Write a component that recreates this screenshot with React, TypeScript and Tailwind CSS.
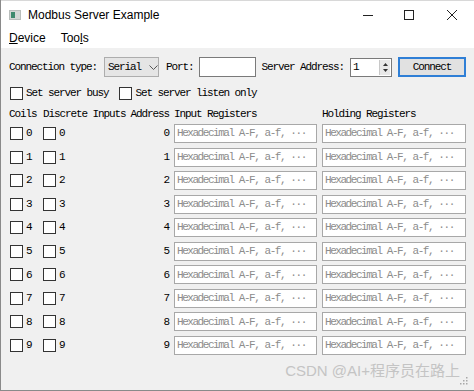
import React from 'react';

const mono = "font-['Liberation_Mono',monospace] text-[11px] tracking-[-1.1px] text-black";
const rows = [0, 1, 2, 3, 4, 5, 6, 7, 8, 9];

function Check() {
  return <span className="block w-[13px] h-[13px] bg-white border border-[#333] shrink-0" />;
}

function HexField({ width }: { width: string }) {
  return (
    <div className={`${width} h-[19px] bg-white border border-[#a8a8a8] flex items-center pl-[2px] overflow-hidden`}>
      <span className="text-[#8c8c8c] whitespace-nowrap tracking-[-1.45px]">Hexadecimal A-F, a-f, ···</span>
    </div>
  );
}

export default function App() {
  return (
    <div className="relative w-[474px] h-[391px] overflow-hidden bg-[#f0f0f0] border-l border-b border-[#8a8a8a]">
      {/* Title bar */}
      <div className="h-[29px] bg-white flex items-center border-t border-[#d8d8d8] font-['Liberation_Sans',sans-serif] text-[12px] text-black">
        <div className="ml-[8px] w-[12px] h-[10px] bg-[#d4d8d6] border border-[#b9bebc] flex items-center pl-[1px]">
          <span className="w-[4px] h-[6px] bg-[#3e8a6e]" />
        </div>
        <span className="ml-[7px]">Modbus Server Example</span>
        <div className="ml-auto flex items-center">
          <svg width="10" height="10" viewBox="0 0 10 10" className="mr-[31px]">
            <path d="M0 5.5h10" stroke="#222" strokeWidth="1" />
          </svg>
          <svg width="10" height="10" viewBox="0 0 10 10" className="mr-[33px]">
            <rect x="0.5" y="0.5" width="9" height="9" fill="none" stroke="#222" strokeWidth="1" />
          </svg>
          <svg width="10" height="10" viewBox="0 0 10 10" className="mr-[17px]">
            <path d="M0 0L10 10M10 0L0 10" stroke="#222" strokeWidth="1" />
          </svg>
        </div>
      </div>

      {/* Menu bar */}
      <div className="h-[19px] bg-white flex items-center font-['Liberation_Sans',sans-serif] text-[12px] text-black pb-[1px]">
        <span className="ml-[8px]"><span className="underline">D</span>evice</span>
        <span className="ml-[15px]">Too<span className="underline">l</span>s</span>
      </div>

      {/* Body */}
      <div className={`${mono} pt-[9px] pl-[8px]`}>
        <div className="h-[20px] flex items-center whitespace-nowrap">
          <span>Connection type:</span>
          <div className="ml-[7px] w-[55px] h-[20px] bg-[#e5e5e5] border border-[#adadad] flex items-center pl-[3px]">
            <span>Serial</span>
            <svg width="9" height="5" viewBox="0 0 9 5" className="ml-[8px]">
              <path d="M0.5 0.5L4.5 4.5L8.5 0.5" fill="none" stroke="#555" strokeWidth="1" />
            </svg>
          </div>
          <span className="ml-[7px]">Port:</span>
          <div className="ml-[5px] w-[57px] h-[20px] bg-white border border-[#7a7a7a]" />
          <span className="ml-[6px]">Server Address:</span>
          <div className="ml-[6px] w-[42px] h-[19px] bg-white border border-[#7a7a7a] flex items-stretch">
            <span className="flex-1 pl-[2px] flex items-center">1</span>
            <div className="w-[11px] my-[1px] mr-[1px] bg-[#e8e8e8] border-l border-[#c8c8c8] flex flex-col items-center justify-center gap-[3px]">
              <svg width="5" height="3" viewBox="0 0 5 3"><path d="M0 3L2.5 0L5 3z" fill="#333" /></svg>
              <svg width="5" height="3" viewBox="0 0 5 3"><path d="M0 0L2.5 3L5 0z" fill="#333" /></svg>
            </div>
          </div>
          <div className="ml-[6px] w-[68px] h-[20px] bg-[#e1e1e1] border-2 border-[#2f7fd6] flex items-center justify-center">
            Connect
          </div>
        </div>

        <div className="mt-[10px] h-[13px] flex items-center whitespace-nowrap">
          <span className="ml-[1px]"><Check /></span>
          <span className="ml-[3px]">Set server busy</span>
          <span className="ml-[10px]"><Check /></span>
          <span className="ml-[4px]">Set server listen only</span>
        </div>

        <div className="mt-[7px] h-[14px] flex items-center whitespace-nowrap">
          <span className="w-[34px]">Coils</span>
          <span className="w-[83px]">Discrete Inputs</span>
          <span className="w-[43px] text-right">Address</span>
          <span className="ml-[5px] w-[143px]">Input Registers</span>
          <span className="ml-[5px] w-[144px]">Holding Registers</span>
        </div>

        <div className="mt-[3px] h-[231px] flex flex-col justify-between">
          {rows.map((n) => (
            <div key={n} className="h-[19px] flex items-center whitespace-nowrap">
              <div className="w-[34px] flex items-center pl-[1px] gap-[3px]">
                <Check />
                <span>{n}</span>
              </div>
              <div className="w-[83px] flex items-center gap-[3px]">
                <Check />
                <span>{n}</span>
              </div>
              <span className="w-[43px] text-right">{n}</span>
              <div className="ml-[5px]"><HexField width="w-[143px]" /></div>
              <div className="ml-[5px]"><HexField width="w-[144px]" /></div>
            </div>
          ))}
        </div>
      </div>

      {/* Watermark */}
      <span className="absolute right-[14px] bottom-[8px] font-['Liberation_Sans','Noto_Sans_CJK_SC',sans-serif] text-[15px] text-[#c4c4c4] whitespace-nowrap">
        CSDN @AI+程序员在路上
      </span>
      <svg width="8" height="8" viewBox="0 0 8 8" className="absolute right-[6px] bottom-[5px]">
        <rect x="6" y="6" width="1.5" height="1.5" fill="#a8a8a8" />
        <rect x="3" y="6" width="1.5" height="1.5" fill="#a8a8a8" />
        <rect x="6" y="3" width="1.5" height="1.5" fill="#a8a8a8" />
        <rect x="0" y="6" width="1.5" height="1.5" fill="#a8a8a8" />
        <rect x="3" y="3" width="1.5" height="1.5" fill="#a8a8a8" />
        <rect x="6" y="0" width="1.5" height="1.5" fill="#a8a8a8" />
      </svg>
    </div>
  );
}
